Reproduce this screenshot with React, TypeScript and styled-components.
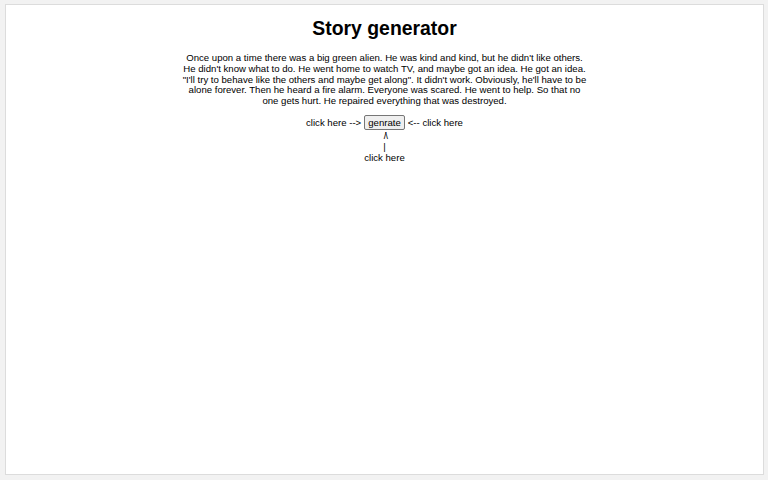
import React from "react";
import styled, { createGlobalStyle } from "styled-components";

const Global = createGlobalStyle`
  html, body {
    margin: 0;
    padding: 0;
    background: #f2f2f2;
  }
  body {
    font-family: "Liberation Sans", Arial, sans-serif;
    color: #000;
  }
`;

const Frame = styled.div`
  box-sizing: border-box;
  margin: 4px 4px 5px 5px;
  height: 471px;
  background: #fff;
  border: 1px solid #dcdcdc;
  display: flex;
  flex-direction: column;
  align-items: center;
`;

const Title = styled.h1`
  margin: 11px 0 0;
  font-size: 19.4px;
  line-height: 24px;
  font-weight: bold;
`;

const Story = styled.p`
  margin: 13px 0 0;
  width: 406px;
  font-size: 9.6px;
  line-height: 10.8px;
  text-align: center;
`;

const Controls = styled.div`
  margin-top: 8px;
  display: flex;
  flex-direction: column;
  align-items: center;
  font-size: 9.6px;
  line-height: 11px;
`;

const Row = styled.div`
  display: flex;
  align-items: center;
  gap: 3px;
`;

const Label = styled.span`
  white-space: nowrap;
`;

/* two slashes pulled together so they meet in a point */
const Arrowhead = styled.span`
  white-space: nowrap;
  letter-spacing: -1.3px;
  margin-right: -1.3px;
  font-size: 9.6px;
  line-height: 11px;
`;

const Button = styled.button`
  font-family: inherit;
  font-size: 9.6px;
  line-height: 11px;
  height: 15px;
  padding: 0 3px;
  background: #efefef;
  border: 1px solid #767676;
  border-radius: 2px;
  color: #000;
`;

export default function App() {
  return (
    <>
      <Global />
      <Frame>
        <Title>Story generator</Title>
        <Story>
          Once upon a time there was a big green alien. He was kind and kind, but he didn't like others.
          He didn't know what to do. He went home to watch TV, and maybe got an idea. He got an idea.
          "I'll try to behave like the others and maybe get along". It didn't work. Obviously, he'll have to be
          alone forever. Then he heard a fire alarm. Everyone was scared. He went to help. So that no
          one gets hurt. He repaired everything that was destroyed.
        </Story>
        <Controls>
          <Row>
            <Label>click here --&gt;</Label>
            <Button>genrate</Button>
            <Label>&lt;-- click here</Label>
          </Row>
          <Arrowhead>/\</Arrowhead>
          <Label>|</Label>
          <Label>click here</Label>
        </Controls>
      </Frame>
    </>
  );
}
